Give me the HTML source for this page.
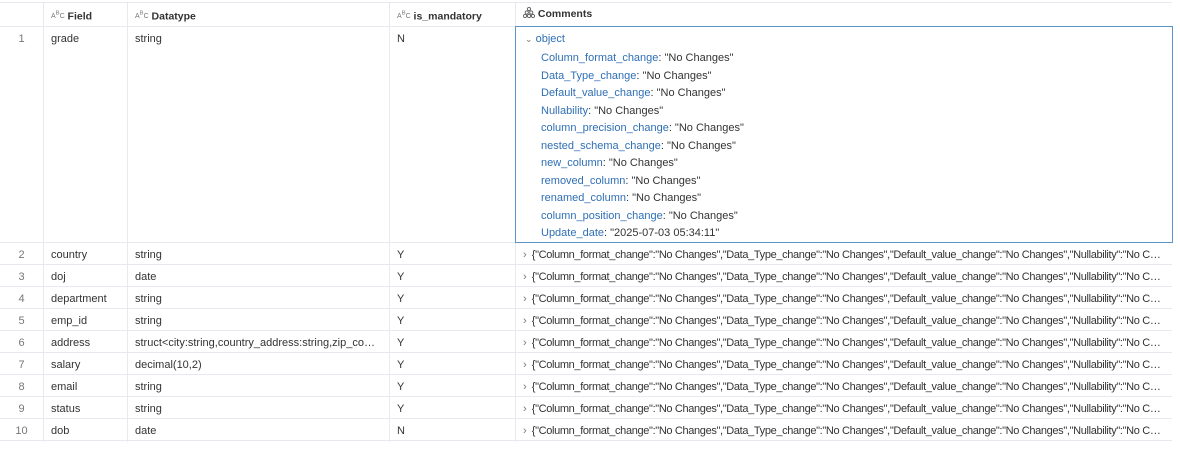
<!DOCTYPE html>
<html><head><meta charset="utf-8"><style>
body{margin:0;width:1180px;height:451px;background:#fff;font-family:"Liberation Sans",sans-serif;font-size:11px;color:#333;position:relative;overflow:hidden}
.hl{position:absolute;left:0;width:1172px;height:1px;background:#e6e9ed}
.vl{position:absolute;width:1px;background:#e6e9ed}
.t{position:absolute;white-space:nowrap;line-height:14px}
.h{font-weight:bold;color:#333;font-size:10.5px}
.n{color:#777;text-align:center;width:43px;left:0}
.k{color:#2f6fb5}
.ic{font-size:7px;color:#777;font-weight:normal;vertical-align:1px}
.c{overflow:hidden;text-overflow:ellipsis;width:640px;letter-spacing:-0.35px}
</style></head><body>
<div class="hl" style="top:2px"></div>
<div class="hl" style="top:26px"></div>
<div class="hl" style="top:242px"></div>
<div class="vl" style="left:43px;top:2px;height:440px"></div>
<div class="vl" style="left:127px;top:2px;height:440px"></div>
<div class="vl" style="left:389px;top:2px;height:440px"></div>
<div class="vl" style="left:515px;top:2px;height:440px"></div>

<div class="t h" style="left:51px;top:7px"><span class="ic">A<sup>B</sup>C</span> Field</div>
<div class="t h" style="left:135px;top:7px"><span class="ic">A<sup>B</sup>C</span> Datatype</div>
<div class="t h" style="left:397px;top:7px"><span class="ic">A<sup>B</sup>C</span> is_mandatory</div>
<div class="t h" style="left:523px;top:7px"><svg width="12" height="11" viewBox="0 0 12 11" style="vertical-align:-1px"><g fill="none" stroke="#666" stroke-width="1"><circle cx="6" cy="2" r="1.6"/><circle cx="3.8" cy="5.5" r="1.6"/><circle cx="8.2" cy="5.5" r="1.6"/><circle cx="2" cy="9" r="1.6"/><circle cx="6" cy="9" r="1.6"/><circle cx="10" cy="9" r="1.6"/></g></svg> Comments</div>

<div class="t n" style="top:32px">1</div>
<div class="t" style="left:51px;top:32px">grade</div>
<div class="t" style="left:135px;top:32px">string</div>
<div class="t" style="left:397px;top:32px">N</div>
<div style="position:absolute;left:515px;top:26px;width:656px;height:215px;border:1px solid #5b93cc;background:#fff"></div>
<div class="t k" style="left:525px;top:32px"><span style="color:#777;font-size:9px">&#8964;</span> object</div>
<div style="position:absolute;left:541px;top:50px;line-height:17.5px;white-space:nowrap">
<div><span class="k">Column_format_change</span>: "No Changes"</div>
<div><span class="k">Data_Type_change</span>: "No Changes"</div>
<div><span class="k">Default_value_change</span>: "No Changes"</div>
<div><span class="k">Nullability</span>: "No Changes"</div>
<div><span class="k">column_precision_change</span>: "No Changes"</div>
<div><span class="k">nested_schema_change</span>: "No Changes"</div>
<div><span class="k">new_column</span>: "No Changes"</div>
<div><span class="k">removed_column</span>: "No Changes"</div>
<div><span class="k">renamed_column</span>: "No Changes"</div>
<div><span class="k">column_position_change</span>: "No Changes"</div>
<div><span class="k">Update_date</span>: "2025-07-03 05:34:11"</div>
</div>

<div class="hl" style="top:264px"></div>
<div class="hl" style="top:286px"></div>
<div class="hl" style="top:308px"></div>
<div class="hl" style="top:330px"></div>
<div class="hl" style="top:352px"></div>
<div class="hl" style="top:374px"></div>
<div class="hl" style="top:396px"></div>
<div class="hl" style="top:418px"></div>
<div class="hl" style="top:440px"></div>

<div class="t n" style="top:248px">2</div><div class="t" style="left:51px;top:248px">country</div><div class="t" style="left:135px;top:248px">string</div><div class="t" style="left:397px;top:248px">Y</div>
<div class="t n" style="top:270px">3</div><div class="t" style="left:51px;top:270px">doj</div><div class="t" style="left:135px;top:270px">date</div><div class="t" style="left:397px;top:270px">Y</div>
<div class="t n" style="top:292px">4</div><div class="t" style="left:51px;top:292px">department</div><div class="t" style="left:135px;top:292px">string</div><div class="t" style="left:397px;top:292px">Y</div>
<div class="t n" style="top:314px">5</div><div class="t" style="left:51px;top:314px">emp_id</div><div class="t" style="left:135px;top:314px">string</div><div class="t" style="left:397px;top:314px">Y</div>
<div class="t n" style="top:336px">6</div><div class="t" style="left:51px;top:336px">address</div><div class="t" style="left:135px;top:336px;width:245px;overflow:hidden;text-overflow:ellipsis">struct&lt;city:string,country_address:string,zip_code:int&gt;</div><div class="t" style="left:397px;top:336px">Y</div>
<div class="t n" style="top:358px">7</div><div class="t" style="left:51px;top:358px">salary</div><div class="t" style="left:135px;top:358px">decimal(10,2)</div><div class="t" style="left:397px;top:358px">Y</div>
<div class="t n" style="top:380px">8</div><div class="t" style="left:51px;top:380px">email</div><div class="t" style="left:135px;top:380px">string</div><div class="t" style="left:397px;top:380px">Y</div>
<div class="t n" style="top:402px">9</div><div class="t" style="left:51px;top:402px">status</div><div class="t" style="left:135px;top:402px">string</div><div class="t" style="left:397px;top:402px">Y</div>
<div class="t n" style="top:424px">10</div><div class="t" style="left:51px;top:424px">dob</div><div class="t" style="left:135px;top:424px">date</div><div class="t" style="left:397px;top:424px">N</div>

<div class="t c" style="left:523px;top:248px"><span style="color:#777">&#8250;</span>&nbsp; {"Column_format_change":"No Changes","Data_Type_change":"No Changes","Default_value_change":"No Changes","Nullability":"No Changes"}</div>
<div class="t c" style="left:523px;top:270px"><span style="color:#777">&#8250;</span>&nbsp; {"Column_format_change":"No Changes","Data_Type_change":"No Changes","Default_value_change":"No Changes","Nullability":"No Changes"}</div>
<div class="t c" style="left:523px;top:292px"><span style="color:#777">&#8250;</span>&nbsp; {"Column_format_change":"No Changes","Data_Type_change":"No Changes","Default_value_change":"No Changes","Nullability":"No Changes"}</div>
<div class="t c" style="left:523px;top:314px"><span style="color:#777">&#8250;</span>&nbsp; {"Column_format_change":"No Changes","Data_Type_change":"No Changes","Default_value_change":"No Changes","Nullability":"No Changes"}</div>
<div class="t c" style="left:523px;top:336px"><span style="color:#777">&#8250;</span>&nbsp; {"Column_format_change":"No Changes","Data_Type_change":"No Changes","Default_value_change":"No Changes","Nullability":"No Changes"}</div>
<div class="t c" style="left:523px;top:358px"><span style="color:#777">&#8250;</span>&nbsp; {"Column_format_change":"No Changes","Data_Type_change":"No Changes","Default_value_change":"No Changes","Nullability":"No Changes"}</div>
<div class="t c" style="left:523px;top:380px"><span style="color:#777">&#8250;</span>&nbsp; {"Column_format_change":"No Changes","Data_Type_change":"No Changes","Default_value_change":"No Changes","Nullability":"No Changes"}</div>
<div class="t c" style="left:523px;top:402px"><span style="color:#777">&#8250;</span>&nbsp; {"Column_format_change":"No Changes","Data_Type_change":"No Changes","Default_value_change":"No Changes","Nullability":"No Changes"}</div>
<div class="t c" style="left:523px;top:424px"><span style="color:#777">&#8250;</span>&nbsp; {"Column_format_change":"No Changes","Data_Type_change":"No Changes","Default_value_change":"No Changes","Nullability":"No Changes"}</div>
</body></html>
